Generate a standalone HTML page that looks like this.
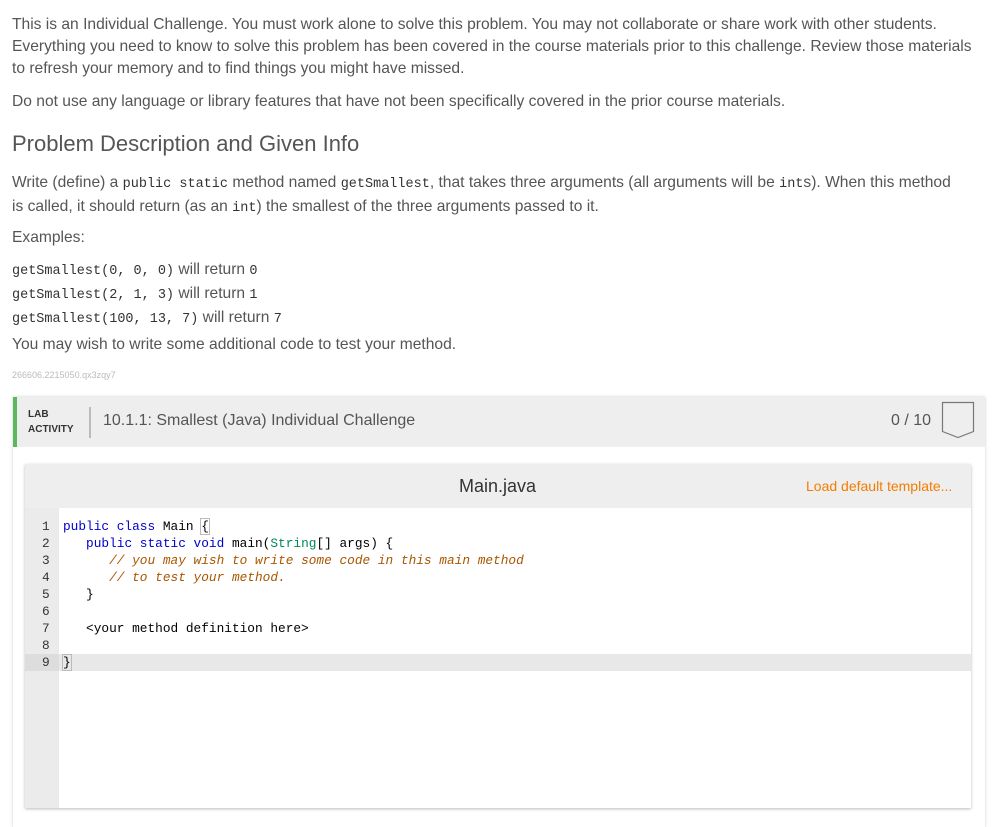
<!DOCTYPE html>
<html><head><meta charset="utf-8"><style>
body{margin:0;background:#fff;font-family:"Liberation Sans",sans-serif;color:#555;width:1002px;height:820px;overflow:hidden;position:relative}
.t{position:absolute;left:12px;font-size:15.6px;line-height:22px;width:972px}
code{font-family:"Liberation Mono",monospace;font-size:13.5px;color:#333}
.m{font-family:"Liberation Mono",monospace;font-size:12.8px;position:absolute;white-space:pre}
</style></head><body>
<div class="t" style="top:14px">This is an Individual Challenge. You must work alone to solve this problem. You may not collaborate or share work with other students. Everything you need to know to solve this problem has been covered in the course materials prior to this challenge. Review those materials to refresh your memory and to find things you might have missed.</div>
<div class="t" style="top:91px">Do not use any language or library features that have not been specifically covered in the prior course materials.</div>
<div class="t" style="top:130px;font-size:22px;line-height:28px;color:#555">Problem Description and Given Info</div>
<div class="t" style="top:172px;width:948px">Write (define) a <code>public static</code> method named <code>getSmallest</code>, that takes three arguments (all arguments will be <code>int</code>s). When this method is called, it should return (as an <code>int</code>) the smallest of the three arguments passed to it.</div>
<div class="t" style="top:227px">Examples:</div>
<div class="t" style="top:259px"><code>getSmallest(0, 0, 0)</code> will return <code>0</code><br><code>getSmallest(2, 1, 3)</code> will return <code>1</code><br><code>getSmallest(100, 13, 7)</code> will return <code>7</code></div>
<div class="t" style="top:334px">You may wish to write some additional code to test your method.</div>
<div class="t" style="top:364px;font-size:9px;color:#bbb">266606.2215050.qx3zqy7</div>

<div style="position:absolute;left:13px;top:397px;width:972px;height:430px;box-shadow:0 0 3px #ccc;background:#fff"></div>
<div style="position:absolute;left:13px;top:397px;width:972px;height:50px;background:#eee;border-left:4px solid #5cb85c;box-sizing:border-box"></div>
<div style="position:absolute;left:28px;top:407px;font-size:10px;font-weight:bold;color:#333;line-height:15px">LAB<br>ACTIVITY</div>
<div style="position:absolute;left:89px;top:407px;width:2px;height:31px;background:#bbb"></div>
<div style="position:absolute;left:103px;top:412px;font-size:16px;color:#555">10.1.1: Smallest (Java) Individual Challenge</div>
<div style="position:absolute;left:891px;top:412px;font-size:16px;color:#555">0 / 10</div>
<svg style="position:absolute;left:941px;top:401px" width="34" height="38"><path d="M1.5 1.5H32.5V30.5L17 36.5L1.5 30.5Z" fill="none" stroke="#777" stroke-width="1.2"/></svg>

<div style="position:absolute;left:25px;top:464px;width:946px;height:344px;background:#fff;box-shadow:0 1px 3px #bbb"></div>
<div style="position:absolute;left:25px;top:464px;width:946px;height:44px;background:#eee"></div>
<div style="position:absolute;left:459px;top:476px;font-size:18px;color:#333">Main.java</div>
<div style="position:absolute;left:806px;top:478px;font-size:14px;color:#f57c00">Load default template...</div>
<div style="position:absolute;left:25px;top:508px;width:34px;height:300px;background:#ebebeb"></div>
<div style="position:absolute;left:25px;top:654px;width:946px;height:17px;background:#e8e8e8"></div>
<div style="position:absolute;left:25px;top:654px;width:34px;height:17px;background:#ddd"></div>
<div class="m" style="left:42px;top:518px;line-height:17px;color:#333;text-align:right">1
2
3
4
5
6
7
8
9</div>
<div class="m" style="left:63px;top:518px;line-height:17px;color:#000"><span style="color:#00c">public class</span> Main <span style="outline:1px solid #bbb">{</span>
   <span style="color:#00c">public static void</span> main(<span style="color:#085">String</span>[] args) {
      <i style="color:#a50">// you may wish to write some code in this main method</i>
      <i style="color:#a50">// to test your method.</i>
   }

   &lt;your method definition here&gt;

<span style="outline:1px solid #bbb">}</span></div>
</body></html>
